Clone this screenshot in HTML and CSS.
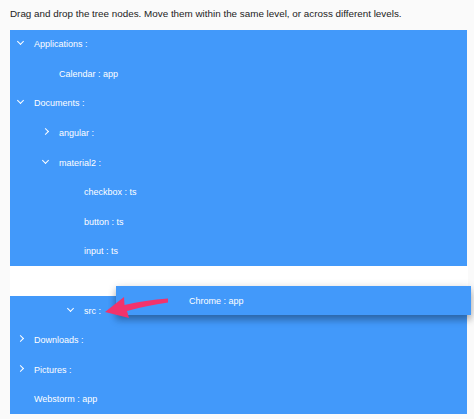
FILE: index.html
```html
<!DOCTYPE html>
<html lang="en">
<head>
    <meta charset="UTF-8">
    <meta name="viewport" content="width=device-width, initial-scale=1.0">
    <title>Tree drag and drop</title>
    <link rel="stylesheet" href="styles.css">
</head>
<body>
    <p class="intro">Drag and drop the tree nodes. Move them within the same level, or across different levels.</p>

    <div class="tree">
        <div class="node level-0"><span class="toggle open"></span>Applications :</div>
        <div class="node level-1 leaf">Calendar : app</div>
        <div class="node level-0"><span class="toggle open"></span>Documents :</div>
        <div class="node level-1"><span class="toggle"></span>angular :</div>
        <div class="node level-1"><span class="toggle open"></span>material2 :</div>
        <div class="node level-2 leaf">checkbox : ts</div>
        <div class="node level-2 leaf">button : ts</div>
        <div class="node level-2 leaf">input : ts</div>
        <!-- drop placeholder -->
        <div class="placeholder"></div>
        <div class="node level-2"><span class="toggle open"></span>src :</div>
        <div class="node level-0"><span class="toggle"></span>Downloads :</div>
        <div class="node level-0"><span class="toggle"></span>Pictures :</div>
        <div class="node level-0 leaf">Webstorm : app</div>
    </div>

    <!-- node being dragged -->
    <div class="drag-preview">Chrome : app</div>

    <svg class="arrow" width="72" height="34" viewBox="0 0 72 34">
        <path d="M5 22 L24 7 L24.5 15 Q45 10 68 8.5 L68 12.5 Q46 15.5 27 21 L29 28 Z" fill="#f2336c"/>
    </svg>
</body>
</html>
```

FILE: styles.css
```css
body {
    font-family: "Liberation Sans", Arial, sans-serif;
    margin: 0;
    padding: 0;
    background-color: #fafafa;
    height: 419px;
    overflow: hidden;
    position: relative;
}
.intro {
    margin: 0;
    padding: 8px 10px 0 10px;
    height: 21.5px;
    font-size: 9.85px;
    color: #222;
}
.tree {
    margin-left: 10px;
    width: 457px;
    background: #4299fa;
}
.node {
    height: 29.6px;
    display: flex;
    align-items: center;
    color: white;
    font-size: 9px;
}
.level-0 {
    padding-left: 5px;
}
.level-1 {
    padding-left: 30px;
}
.level-2 {
    padding-left: 55px;
}
.leaf {
    padding-left: 24px;
}
.level-1.leaf {
    padding-left: 49px;
}
.level-2.leaf {
    padding-left: 74px;
}
.toggle {
    width: 19px;
    height: 10px;
    display: inline-block;
    position: relative;
}
.toggle::before {
    content: "";
    position: absolute;
    left: 3px;
    top: 1px;
    width: 4px;
    height: 4px;
    border-right: 1.8px solid white;
    border-bottom: 1.8px solid white;
    transform: rotate(-45deg);
}
.toggle.open::before {
    left: 3px;
    top: 0px;
    transform: rotate(45deg);
}
.placeholder {
    height: 29.6px;
    background: white;
    margin-right: -1px;
}
.drag-preview {
    position: absolute;
    left: 116px;
    top: 286px;
    width: 355px;
    height: 29px;
    box-sizing: border-box;
    padding-left: 73px;
    display: flex;
    align-items: center;
    background: #4299fa;
    color: white;
    font-size: 9px;
    box-shadow: 0 5px 7px rgba(0, 0, 0, 0.28), 0 1px 10px rgba(0, 0, 0, 0.12);
}
.arrow {
    position: absolute;
    left: 100px;
    top: 290px;
}
```
